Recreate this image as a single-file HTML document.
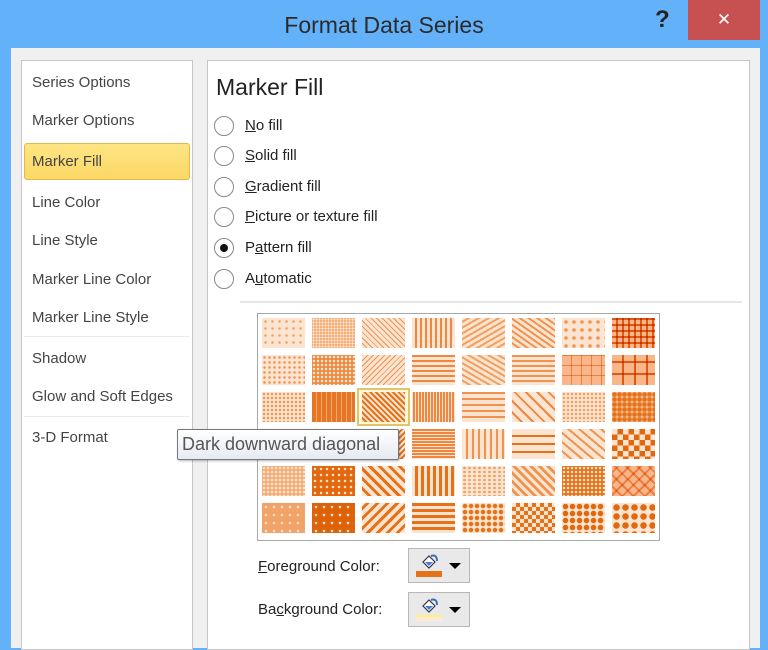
<!DOCTYPE html>
<html><head><meta charset="utf-8"><style>
*{margin:0;padding:0;box-sizing:border-box}
body{width:768px;height:641px;overflow:hidden;background:#63b1f8;font-family:"Liberation Sans","DejaVu Sans",sans-serif;position:relative}
.title{position:absolute;left:0;top:0;width:768px;height:48px;text-align:center;line-height:50px;font-size:23px;color:#2b2b2b}
.help{position:absolute;left:655px;top:6px;font-size:24px;font-weight:bold;color:#222}
.close{position:absolute;left:688px;top:0;width:72px;height:40px;background:#c75050;color:#fff;font-size:17px;text-align:center;line-height:40px;font-weight:bold}
.gray{position:absolute;left:11px;top:48px;width:749px;height:600px;background:#f0f0f0}
.side{position:absolute;left:21px;top:60px;width:172px;height:590px;background:#fff;border:1px solid #c6c6c6}
.si{position:absolute;left:10px;font-size:15px;color:#444}
.sel{position:absolute;left:2px;top:82px;width:166px;height:37px;background:linear-gradient(#fde584,#fcd866);border:1px solid #e5b84c;border-radius:3px}
.sep{position:absolute;left:2px;width:166px;height:1px;background:#e8ebf0}
.panel{position:absolute;left:207px;top:60px;width:543px;height:590px;background:#fff;border:1px solid #c6c6c6}
h1{position:absolute;left:216px;top:74px;font-size:23px;font-weight:normal;color:#222}
.r{position:absolute;left:214px;width:20px;height:20px;border:1px solid #888;border-radius:50%;background:#fff}
.r.on:after{content:"";position:absolute;left:5px;top:5px;width:8px;height:8px;border-radius:50%;background:#111}
.rl{position:absolute;left:245px;font-size:15px;color:#222}
u{text-decoration:underline}
.hr{position:absolute;left:240px;top:301px;width:502px;height:2px;background:#e6e6e6}
.grid{position:absolute;left:257px;top:313px;width:403px;height:228px;border:1px solid #a8a8a8;background:#fff}
.c{position:absolute;width:43px;height:30px;background-color:#fde4d0}
.tip{position:absolute;left:177px;top:429px;width:222px;height:31px;border:1px solid #777;border-radius:2px;background:linear-gradient(#fff,#e6eaf3);font-size:18px;color:#555;line-height:29px;padding-left:4px;box-shadow:1px 1px 2px rgba(0,0,0,.3)}
.lab{position:absolute;left:258px;font-size:15px;color:#222}
.btn{position:absolute;left:408px;width:62px;height:35px;border:1px solid #b8b8b8;background:#e9e9e9}
.tri{position:absolute;left:40px;top:14px;border-left:6px solid transparent;border-right:6px solid transparent;border-top:6px solid #000}
.bar{position:absolute;left:7px;top:22px;width:26px;height:6px}
.ic{position:absolute;left:10px;top:4px}
</style></head><body>
<div class="title">Format Data Series</div>
<div class="help">?</div>
<div class="close">✕</div>
<div class="gray"></div>
<div class="side">
<div class="sel"></div>
<div class="si" style="top:13px">Series Options</div>
<div class="si" style="top:51px">Marker Options</div>
<div class="si" style="top:92px">Marker Fill</div>
<div class="si" style="top:133px">Line Color</div>
<div class="si" style="top:171px">Line Style</div>
<div class="si" style="top:210px">Marker Line Color</div>
<div class="si" style="top:248px">Marker Line Style</div>
<div class="sep" style="top:275px"></div>
<div class="si" style="top:289px">Shadow</div>
<div class="si" style="top:327px">Glow and Soft Edges</div>
<div class="sep" style="top:355px"></div>
<div class="si" style="top:368px">3-D Format</div>
</div>
<div class="panel"></div>
<h1>Marker Fill</h1>
<div class="r" style="top:116px"></div><div class="rl" style="top:117px"><u>N</u>o fill</div>
<div class="r" style="top:146px"></div><div class="rl" style="top:147px"><u>S</u>olid fill</div>
<div class="r" style="top:177px"></div><div class="rl" style="top:178px"><u>G</u>radient fill</div>
<div class="r" style="top:207px"></div><div class="rl" style="top:208px"><u>P</u>icture or texture fill</div>
<div class="r on" style="top:238px"></div><div class="rl" style="top:239px">P<u>a</u>ttern fill</div>
<div class="r" style="top:269px"></div><div class="rl" style="top:270px">A<u>u</u>tomatic</div>
<div class="hr"></div>
<div class="grid"></div>
<div style="position:absolute;left:0;top:0">
<div class="c" style="left:262px;top:318px;background-image:radial-gradient(#f0a060 1px,transparent 1.5px);background-size:7px 7px"></div>
<div class="c" style="left:312px;top:318px;background-image:radial-gradient(#fde4d0 1px,transparent 1.5px);background-size:3px 3px;background-color:#f09a5a"></div>
<div class="c" style="left:362px;top:318px;background-image:repeating-linear-gradient(45deg,#fde4d0 0 3px,#ee9350 3px 4px)"></div>
<div class="c" style="left:412px;top:318px;background-image:repeating-linear-gradient(90deg,#fde4d0 0 3px,#ee8840 3px 5px)"></div>
<div class="c" style="left:462px;top:318px;background-image:repeating-linear-gradient(-30deg,#fde4d0 0 3px,#f0a060 3px 5px)"></div>
<div class="c" style="left:512px;top:318px;background-image:repeating-linear-gradient(35deg,#fde4d0 0 3px,#ee9350 3px 5px)"></div>
<div class="c" style="left:562px;top:318px;background-image:radial-gradient(#ee9350 1.5px,transparent 2px);background-size:8px 8px"></div>
<div class="c" style="left:612px;top:318px;background-image:repeating-linear-gradient(0deg,#fde4d0 0 4px,#e57118 4px 6px),repeating-linear-gradient(90deg,#fde4d0 0 4px,#e57118 4px 6px);background-blend-mode:multiply"></div>
<div class="c" style="left:262px;top:355px;background-image:radial-gradient(#ee9350 1px,transparent 1.5px);background-size:5px 5px"></div>
<div class="c" style="left:312px;top:355px;background-image:radial-gradient(#fde4d0 1px,transparent 1.5px);background-size:4px 4px;background-color:#eb8a40"></div>
<div class="c" style="left:362px;top:355px;background-image:repeating-linear-gradient(-45deg,#fde4d0 0 3px,#ee9350 3px 4px)"></div>
<div class="c" style="left:412px;top:355px;background-image:repeating-linear-gradient(0deg,#fde4d0 0 3px,#ee8840 3px 5px)"></div>
<div class="c" style="left:462px;top:355px;background-image:repeating-linear-gradient(30deg,#fde4d0 0 3px,#f0a060 3px 5px)"></div>
<div class="c" style="left:512px;top:355px;background-image:repeating-linear-gradient(0deg,#fde4d0 0 3px,#ee9350 3px 5px)"></div>
<div class="c" style="left:562px;top:355px;background-image:repeating-linear-gradient(0deg,#fde4d0 0 9px,#f0a060 9px 10px),repeating-linear-gradient(90deg,#fde4d0 0 9px,#f0a060 9px 10px);background-blend-mode:multiply"></div>
<div class="c" style="left:612px;top:355px;background-image:repeating-linear-gradient(0deg,#fde4d0 0 10px,#e57118 10px 12px),repeating-linear-gradient(90deg,#fde4d0 0 10px,#e57118 10px 12px);background-blend-mode:multiply"></div>
<div class="c" style="left:262px;top:392px;background-image:radial-gradient(#ee9350 1px,transparent 1.5px);background-size:4px 4px"></div>
<div class="c" style="left:312px;top:392px;background-image:repeating-linear-gradient(90deg,#e67624 0 4px,#f5a870 4px 5px)"></div>
<div class="c" style="left:357px;top:388px;width:53px;height:38px;border:2px solid #e2c56a;background:#fff8d8"></div>
<div class="c" style="left:362px;top:392px;background-image:repeating-linear-gradient(45deg,#fde4d0 0 2px,#e57118 2px 4px)"></div>
<div class="c" style="left:412px;top:392px;background-image:repeating-linear-gradient(90deg,#fde4d0 0 1px,#ee8840 1px 3px)"></div>
<div class="c" style="left:462px;top:392px;background-image:repeating-linear-gradient(0deg,#fde4d0 0 4px,#ee9350 4px 6px)"></div>
<div class="c" style="left:512px;top:392px;background-image:repeating-linear-gradient(45deg,#fde4d0 0 6px,#ee8840 6px 8px)"></div>
<div class="c" style="left:562px;top:392px;background-image:radial-gradient(#f0a060 1px,transparent 1.5px);background-size:4px 4px"></div>
<div class="c" style="left:612px;top:392px;background-image:radial-gradient(#e57118 2px,transparent 2.5px);background-size:5px 5px;background-color:#f5b585"></div>
<div class="c" style="left:262px;top:429px;background:#f5b585"></div>
<div class="c" style="left:312px;top:429px;background:#e2680e"></div>
<div class="c" style="left:362px;top:429px;background-image:repeating-linear-gradient(-45deg,#fde4d0 0 2px,#e57118 2px 4px)"></div>
<div class="c" style="left:412px;top:429px;background-image:repeating-linear-gradient(0deg,#fde4d0 0 1px,#ee8840 1px 3px)"></div>
<div class="c" style="left:462px;top:429px;background-image:repeating-linear-gradient(90deg,#fde4d0 0 4px,#ee9350 4px 6px)"></div>
<div class="c" style="left:512px;top:429px;background-image:repeating-linear-gradient(0deg,#fde4d0 0 6px,#e57118 6px 8px)"></div>
<div class="c" style="left:562px;top:429px;background-image:repeating-linear-gradient(40deg,#fde4d0 0 5px,#ee9350 5px 7px)"></div>
<div class="c" style="left:612px;top:429px;background-image:conic-gradient(#e2680e 25%,#fde4d0 0 50%,#e2680e 0 75%,#fde4d0 0);background-size:11px 11px"></div>
<div class="c" style="left:262px;top:466px;background-image:radial-gradient(#fde4d0 1px,transparent 1.5px);background-size:4px 4px;background-color:#f3ad78"></div>
<div class="c" style="left:312px;top:466px;background-image:radial-gradient(#fde4d0 1px,transparent 1.5px);background-size:6px 6px;background-color:#e2680e"></div>
<div class="c" style="left:362px;top:466px;background-image:repeating-linear-gradient(45deg,#fde4d0 0 4px,#e57118 4px 7px)"></div>
<div class="c" style="left:412px;top:466px;background-image:repeating-linear-gradient(90deg,#fde4d0 0 3px,#e57118 3px 6px)"></div>
<div class="c" style="left:462px;top:466px;background-image:radial-gradient(#f0a060 1.2px,transparent 1.7px);background-size:5px 4px"></div>
<div class="c" style="left:512px;top:466px;background-image:repeating-linear-gradient(45deg,#fde4d0 0 3px,#ee9350 3px 6px)"></div>
<div class="c" style="left:562px;top:466px;background-image:radial-gradient(#fde4d0 1px,transparent 1.5px);background-size:4px 4px;background-color:#e57118"></div>
<div class="c" style="left:612px;top:466px;background-image:repeating-linear-gradient(45deg,#fde4d0 0 6px,#f0a060 6px 8px),repeating-linear-gradient(-45deg,#fde4d0 0 6px,#f0a060 6px 8px);background-blend-mode:multiply"></div>
<div class="c" style="left:262px;top:503px;background-image:radial-gradient(#fde4d0 1px,transparent 1.5px);background-size:8px 8px;background-color:#f2a369"></div>
<div class="c" style="left:312px;top:503px;background-image:radial-gradient(#fde4d0 1px,transparent 1.5px);background-size:8px 8px;background-color:#de620a"></div>
<div class="c" style="left:362px;top:503px;background-image:repeating-linear-gradient(-45deg,#fde4d0 0 4px,#e57118 4px 7px)"></div>
<div class="c" style="left:412px;top:503px;background-image:repeating-linear-gradient(0deg,#fde4d0 0 3px,#e57118 3px 6px)"></div>
<div class="c" style="left:462px;top:503px;background-image:radial-gradient(#e57118 2px,transparent 2.5px);background-size:6px 6px"></div>
<div class="c" style="left:512px;top:503px;background-image:conic-gradient(#e57118 25%,#fde4d0 0 50%,#e57118 0 75%,#fde4d0 0);background-size:8px 8px"></div>
<div class="c" style="left:562px;top:503px;background-image:radial-gradient(#e2680e 2.5px,#fde4d0 3px);background-size:7px 7px"></div>
<div class="c" style="left:612px;top:503px;background-image:radial-gradient(#e2680e 3px,transparent 3.5px);background-size:9px 9px"></div>
</div>
<div class="tip">Dark downward diagonal</div>
<div class="lab" style="top:558px"><u>F</u>oreground Color:</div>
<div class="btn" style="top:548px"><svg class="ic" width="22" height="18" viewBox="0 0 22 18"><path d="M4 9 L10 3 L16 9 L10 15 Z" fill="#fff" stroke="#334" stroke-width="1.2"/><path d="M6 9 L14 9 L10 13Z" fill="#4a7fd0"/><path d="M12 3 Q18 1 18 8" fill="none" stroke="#3a6fc0" stroke-width="2"/></svg><div class="bar" style="background:#e57118"></div><div class="tri"></div></div>
<div class="lab" style="top:601px">Ba<u>c</u>kground Color:</div>
<div class="btn" style="top:592px"><svg class="ic" width="22" height="18" viewBox="0 0 22 18"><path d="M4 9 L10 3 L16 9 L10 15 Z" fill="#fff" stroke="#334" stroke-width="1.2"/><path d="M6 9 L14 9 L10 13Z" fill="#4a7fd0"/><path d="M12 3 Q18 1 18 8" fill="none" stroke="#3a6fc0" stroke-width="2"/></svg><div class="bar" style="background:#fde9d9;border-top:2px solid #fff27a"></div><div class="tri"></div></div>
</body></html>
